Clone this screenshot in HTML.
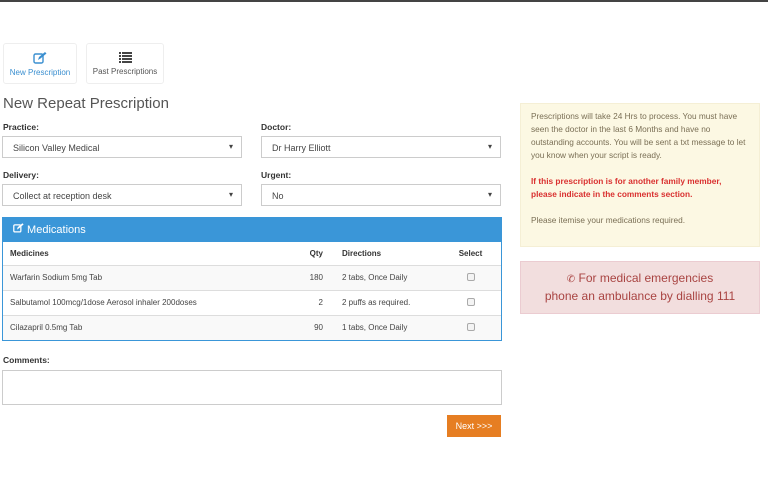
<!DOCTYPE html>
<html><head><style>
*{box-sizing:border-box;margin:0;padding:0}
body{width:768px;height:485px;background:#fff;font-family:"Liberation Sans",sans-serif;position:relative;overflow:hidden;color:#333}
.a{position:absolute}
.btn{border:1px solid #eee;border-radius:3px;background:#fff;font-size:8px;text-align:center;color:#555}
.lbl{font-size:8.5px;font-weight:bold;color:#333}
.sel{border:1px solid #ccc;height:22px;font-size:9px;padding:6px 10px;color:#444;background:#fff}
.sel:after{content:"▾";position:absolute;right:8px;top:5px;font-size:8px}
table{border-collapse:collapse;width:100%;font-size:8px;color:#444;table-layout:fixed}
td,th{height:25px;padding:0 7px;border-top:1px solid #ddd;text-align:left;white-space:nowrap}
th{height:23px;border-top:none;font-weight:bold;color:#333}
.cb{display:inline-block;width:8px;height:8px;border:1px solid #aaa;border-radius:2px;background:#f4f4f4}
</style></head><body>
<div class="a" style="left:0;top:0;width:768px;height:2px;background:#444"></div>
<div class="a btn" style="left:3px;top:43px;width:74px;height:41px;color:#3a8fd0">
<svg width="14" height="12" viewBox="0 0 14 12" style="margin-top:8px"><rect x="1" y="2" width="9" height="9" rx="1.5" fill="none" stroke="#3a8fd0" stroke-width="1.4"/><path d="M5 8l1-3 6-5 1.5 1.5-6 5z" fill="#3a8fd0"/></svg>
<div style="margin-top:2px">New Prescription</div></div>
<div class="a btn" style="left:86px;top:43px;width:78px;height:41px">
<svg width="13" height="11" viewBox="0 0 13 11" style="margin-top:8px"><g fill="#444"><rect x="0" y="0" width="2" height="2"/><rect x="3" y="0" width="10" height="2"/><rect x="0" y="3" width="2" height="2"/><rect x="3" y="3" width="10" height="2"/><rect x="0" y="6" width="2" height="2"/><rect x="3" y="6" width="10" height="2"/><rect x="0" y="9" width="2" height="2"/><rect x="3" y="9" width="10" height="2"/></g></svg>
<div style="margin-top:2px">Past Prescriptions</div></div>
<div class="a" style="left:3px;top:95px;font-size:15px;color:#555">New Repeat Prescription</div>
<div class="a lbl" style="left:3px;top:122px">Practice:</div>
<div class="a sel" style="left:2px;top:136px;width:240px">Silicon Valley Medical</div>
<div class="a lbl" style="left:261px;top:122px">Doctor:</div>
<div class="a sel" style="left:261px;top:136px;width:240px">Dr Harry Elliott</div>
<div class="a lbl" style="left:3px;top:170px">Delivery:</div>
<div class="a sel" style="left:2px;top:184px;width:240px">Collect at reception desk</div>
<div class="a lbl" style="left:261px;top:170px">Urgent:</div>
<div class="a sel" style="left:261px;top:184px;width:240px">No</div>
<div class="a" style="left:2px;top:217px;width:500px;border:1px solid #3a96d8">
<div style="background:#3a96d8;height:24px;color:#fff;font-size:11px;padding:5px 10px">
<svg width="11" height="10" viewBox="0 0 14 12"><rect x="1" y="2" width="9" height="9" rx="1.5" fill="none" stroke="#fff" stroke-width="1.6"/><path d="M5 8l1-3 6-5 1.5 1.5-6 5z" fill="#fff"/></svg> Medications</div>
<table><colgroup><col style="width:287px"><col style="width:40px"><col style="width:110px"><col></colgroup>
<tr><th>Medicines</th><th style="text-align:right">Qty</th><th style="padding-left:12px">Directions</th><th style="text-align:center">Select</th></tr>
<tr style="background:#f9f9f9"><td>Warfarin Sodium  5mg Tab</td><td style="text-align:right">180</td><td style="padding-left:12px">2 tabs, Once Daily</td><td style="text-align:center"><span class="cb"></span></td></tr>
<tr><td>Salbutamol  100mcg/1dose Aerosol inhaler 200doses</td><td style="text-align:right">2</td><td style="padding-left:12px">2 puffs as required.</td><td style="text-align:center"><span class="cb"></span></td></tr>
<tr style="background:#f9f9f9"><td>Cilazapril  0.5mg Tab</td><td style="text-align:right">90</td><td style="padding-left:12px">1 tabs, Once Daily</td><td style="text-align:center"><span class="cb"></span></td></tr></table></div>
<div class="a lbl" style="left:3px;top:355px">Comments:</div>
<div class="a" style="left:2px;top:370px;width:500px;height:35px;border:1px solid #ccc"></div>
<div class="a" style="left:447px;top:415px;width:54px;height:22px;background:#e67e22;color:#fff;font-size:9px;text-align:center;line-height:22px">Next &gt;&gt;&gt;</div>
<div class="a" style="left:520px;top:103px;width:240px;height:144px;background:#fcf8e3;border:1px solid #f5efd5;font-size:8.3px;line-height:13px;color:#7a6f55;padding:6px 10px">
<div>Prescriptions will take 24 Hrs to process. You must have seen the doctor in the last 6 Months and have no outstanding accounts. You will be sent a txt message to let you know when your script is ready.</div>
<div style="color:#d9302f;font-weight:bold;margin-top:13px">If this prescription is for another family member, please indicate in the comments section.</div>
<div style="margin-top:13px">Please itemise your medications required.</div></div>
<div class="a" style="left:520px;top:261px;width:240px;height:53px;background:#f2dede;border:1px solid #ebccd1;color:#a94442;font-size:12px;text-align:center;line-height:16px;padding-top:8px">
<span style="font-size:10px">&#9990;</span> For medical emergencies<br>phone an ambulance by dialling 111</div>
</body></html>
